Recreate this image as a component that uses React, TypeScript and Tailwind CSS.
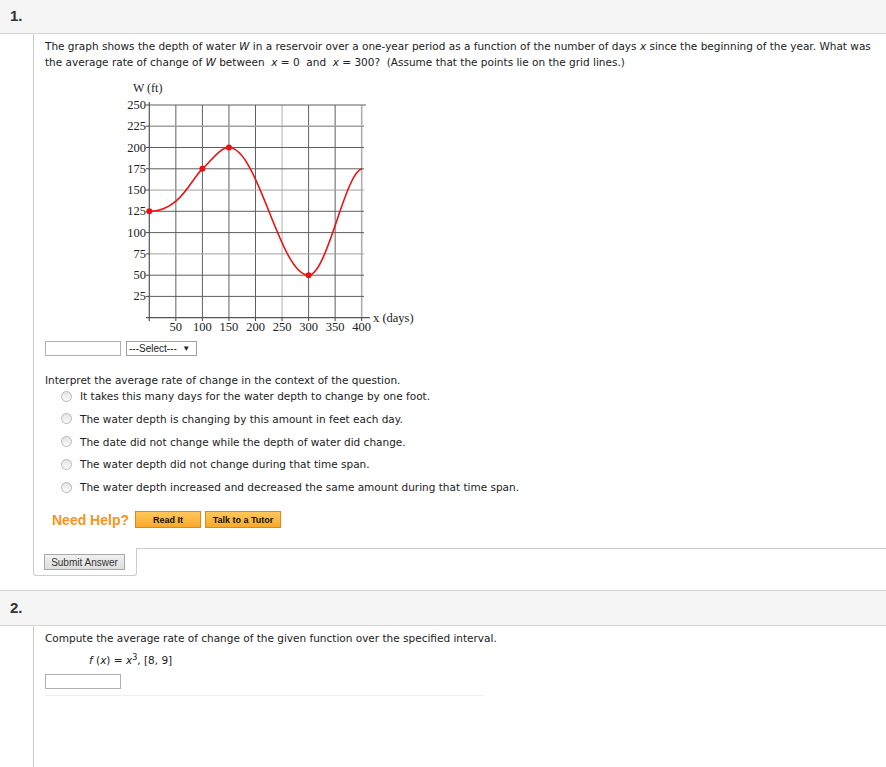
import React from "react";

const gx = [29.3, 55.85, 82.4, 108.95, 135.5, 162.05, 188.6, 215.15, 241.7];
const gy = [27, 48.2, 69.5, 90.8, 112.05, 133.3, 154.6, 175.9, 197.2, 218.4];
const yLabels = ["250", "225", "200", "175", "150", "125", "100", "75", "50", "25"];
const xLabels = ["50", "100", "150", "200", "250", "300", "350", "400"];

function Graph() {
  return (
    <svg width="300" height="258" viewBox="0 0 300 258" className="block">
      {gx.slice(1).map((x, i) => (
        <line key={"v" + i} x1={x} y1={27} x2={x} y2={239.7} stroke={i === 7 || i === 4 ? "#b0b0b0" : "#606060"} strokeWidth={i === 7 ? 1.6 : 1} />
      ))}
      {gy.map((y, i) => (
        <line key={"h" + i} x1={29.3} y1={y} x2={i === 0 ? 246 : 244} y2={y} stroke={i === 1 || i === 4 || i === 7 ? "#a0a0a0" : "#5e5e5e"} strokeWidth={i === 1 ? 1.5 : 1} />
      ))}
      {gy.map((y, i) => (
        <line key={"t" + i} x1={26} y1={y} x2={29.3} y2={y} stroke="#444" strokeWidth={1} />
      ))}
      {gx.slice(1).map((x, i) => (
        <line key={"xt" + i} x1={x} y1={239.7} x2={x} y2={243} stroke="#444" strokeWidth={1} />
      ))}
      <line x1={26} y1={239.7} x2={250} y2={239.7} stroke="#555" strokeWidth={1.2} />
      <line x1={29.3} y1={24} x2={29.3} y2={243} stroke="#555" strokeWidth={1.2} />
      {yLabels.map((t, i) => (
        <text key={"yl" + i} x={26} y={gy[i] + 4} textAnchor="end" fontFamily="'Liberation Serif', serif" fontSize="12.5" fill="#222">
          {t}
        </text>
      ))}
      {xLabels.map((t, i) => (
        <text key={"xl" + i} x={gx[i + 1]} y={253} textAnchor="middle" fontFamily="'Liberation Serif', serif" fontSize="12.5" fill="#222">
          {t}
        </text>
      ))}
      <text x={13} y={14} fontFamily="'Liberation Serif', serif" fontSize="12" fill="#222">W (ft)</text>
      <text x={253} y={244} fontFamily="'Liberation Serif', serif" fontSize="12.5" fill="#222">x (days)</text>
      <path
        d="M29.3,133.3 C60,133.3 71,101 82.4,90.8 C92,82 100,69.5 108.95,69.5 C138,69.5 160,197.2 188.6,197.2 C207,197.2 225,95 241.7,90.8"
        fill="none"
        stroke="#ee1111"
        strokeWidth={1.6}
      />
      {[
        [29.3, 133.3],
        [82.4, 90.8],
        [108.95, 69.5],
        [188.6, 197.2],
      ].map(([x, y], i) => (
        <circle key={"c" + i} cx={x} cy={y} r={3} fill="#ee1111" />
      ))}
    </svg>
  );
}

function Radio({ label }: { label: string }) {
  return (
    <div className="flex items-center h-[16px]">
      <span className="ml-[16px] w-[11px] h-[11px] rounded-full border border-[#b8b8b8] bg-gradient-to-b from-[#e4e4e4] to-[#fafafa]" />
      <span className="ml-[8px]">{label}</span>
    </div>
  );
}

const verdana = "font-['DejaVu_Sans',_Verdana,_sans-serif]";

export default function App() {
  return (
    <div className={`w-[886px] h-[767px] bg-white text-[#222] overflow-hidden flex flex-col`}>
      <div className="h-[34px] shrink-0 bg-[#f5f5f5] border-b border-[#d6d6d6] flex items-center pl-[10px] font-['Liberation_Sans',_Arial,_sans-serif] font-bold text-[15px] text-[#333]">
        1.
      </div>
      <div className={`ml-[33px] border-l border-[#cccccc] pl-[11px] pt-[4px] pb-[20px] ${verdana} text-[10.5px] leading-[16px]`}>
        <div className="whitespace-nowrap">
          The graph shows the depth of water <i>W</i> in a reservoir over a one-year period as a function of the number of days <i>x</i> since the beginning of the year. What was
          <br />
          the average rate of change of <i>W</i> between&nbsp; <i>x</i> = 0&nbsp; and&nbsp; <i>x</i> = 300?&nbsp; (Assume that the points lie on the grid lines.)
        </div>
        <div className="mt-[8px] ml-[75px]">
          <Graph />
        </div>
        <div className="mt-[5px] flex items-center gap-[5px]">
          <div className="w-[76px] h-[15px] border border-[#b0b0b0] bg-white" />
          <div className="w-[71px] h-[15px] border border-[#a0a0a0] bg-white flex items-center pl-[2px] font-['Liberation_Sans',_Arial,_sans-serif] text-[10px] text-[#222] leading-none">
            ---Select---&nbsp;&nbsp;<span className="text-[8px]">▼</span>
          </div>
        </div>
        <div className="mt-[16px]">Interpret the average rate of change in the context of the question.</div>
        <div className="flex flex-col gap-[6.75px]">
          <Radio label="It takes this many days for the water depth to change by one foot." />
          <Radio label="The water depth is changing by this amount in feet each day." />
          <Radio label="The date did not change while the depth of water did change." />
          <Radio label="The water depth did not change during that time span." />
          <Radio label="The water depth increased and decreased the same amount during that time span." />
        </div>
        <div className="mt-[16px] h-[17px] flex items-center pl-[7px] font-['Liberation_Sans',_Arial,_sans-serif]">
          <span className="text-[14px] font-bold text-[#f7941d] leading-none">Need Help?</span>
          <div className="ml-[6px] w-[66px] h-[17px] border border-[#e0891a] bg-gradient-to-b from-[#ffc85a] to-[#f9a825] flex items-center justify-center text-[9px] font-bold text-[#111]">
            Read It
          </div>
          <div className="ml-[4px] w-[76px] h-[17px] border border-[#e0891a] bg-gradient-to-b from-[#ffc85a] to-[#f9a825] flex items-center justify-center text-[9px] font-bold text-[#111]">
            Talk to a Tutor
          </div>
        </div>
      </div>
      <div className="flex shrink-0">
        <div className="ml-[33px] w-[104px] h-[28px] border-l border-b border-r border-[#cccccc] rounded-b-[3px] pl-[10px] pt-[6px]">
          <div className="w-[81px] h-[16px] border border-[#a8a8a8] bg-gradient-to-b from-[#f0f0f0] to-[#dedede] flex items-center justify-center font-['Liberation_Sans',_Arial,_sans-serif] text-[10px] text-[#333]">
            Submit Answer
          </div>
        </div>
        <div className="flex-1 border-t border-[#cccccc]" />
      </div>
      <div className="mt-[14px] h-[36px] shrink-0 bg-[#f5f5f5] border-t border-b border-[#d6d6d6] flex items-center pl-[10px] font-['Liberation_Sans',_Arial,_sans-serif] font-bold text-[15px] text-[#333]">
        2.
      </div>
      <div className={`flex-1 ml-[33px] border-l border-[#cccccc] pl-[11px] pt-[4px] ${verdana} text-[10.5px] leading-[16px]`}>
        <div>Compute the average rate of change of the given function over the specified interval.</div>
        <div className="mt-[6px] pl-[44px]">
          <i>f</i> (<i>x</i>) = <i>x</i>
          <sup className="text-[8px]">3</sup>, [8, 9]
        </div>
        <div className="mt-[6px] w-[76px] h-[15px] border border-[#b0b0b0] bg-white" />
        <div className="mt-[6px] w-[440px] border-b border-[#f0f0f0]" />
      </div>
    </div>
  );
}
